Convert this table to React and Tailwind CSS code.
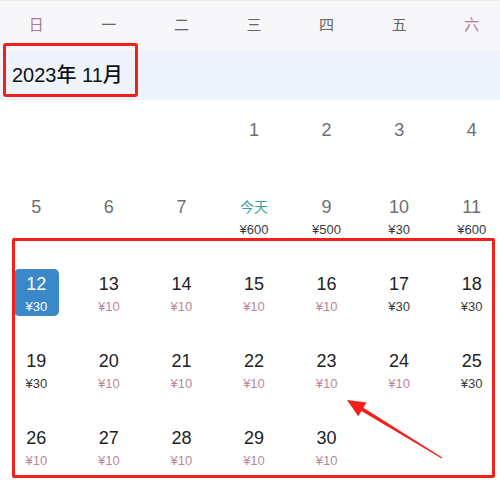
import React from 'react';

const weekdays = ['日', '一', '二', '三', '四', '五', '六'];

const rows = [
  [null, null, null, { d: '1', muted: true }, { d: '2', muted: true }, { d: '3', muted: true }, { d: '4', muted: true }],
  [
    { d: '5', muted: true },
    { d: '6', muted: true },
    { d: '7', muted: true },
    { d: '今天', today: true, p: '¥600', pc: 'dark' },
    { d: '9', muted: true, p: '¥500', pc: 'dark' },
    { d: '10', muted: true, p: '¥30', pc: 'dark' },
    { d: '11', muted: true, p: '¥600', pc: 'dark' },
  ],
  [
    { d: '12', p: '¥30', selected: true },
    { d: '13', p: '¥10', pc: 'pink' },
    { d: '14', p: '¥10', pc: 'pink' },
    { d: '15', p: '¥10', pc: 'pink' },
    { d: '16', p: '¥10', pc: 'pink' },
    { d: '17', p: '¥30', pc: 'dark' },
    { d: '18', p: '¥30', pc: 'dark' },
  ],
  [
    { d: '19', p: '¥30', pc: 'dark' },
    { d: '20', p: '¥10', pc: 'pink' },
    { d: '21', p: '¥10', pc: 'pink' },
    { d: '22', p: '¥10', pc: 'pink' },
    { d: '23', p: '¥10', pc: 'pink' },
    { d: '24', p: '¥10', pc: 'pink' },
    { d: '25', p: '¥30', pc: 'dark' },
  ],
  [
    { d: '26', p: '¥10', pc: 'pink' },
    { d: '27', p: '¥10', pc: 'pink' },
    { d: '28', p: '¥10', pc: 'pink' },
    { d: '29', p: '¥10', pc: 'pink' },
    { d: '30', p: '¥10', pc: 'pink' },
    null,
    null,
  ],
];

const DayCell = ({ cell }) => {
  if (!cell) return <div />;
  if (cell.selected) {
    return (
      <div className="flex justify-center pt-[15px]">
        <div className="w-[45px] h-[47px] rounded-[5px] bg-[#3b88c8] flex flex-col items-center pt-[4px] text-white">
          <span className="text-[18px] leading-[22px]">{cell.d}</span>
          <span className="text-[13px] leading-[16px] mt-[4px]">{cell.p}</span>
        </div>
      </div>
    );
  }
  const numColor = cell.today ? 'text-[#3d9c9a] text-[14px]' : cell.muted ? 'text-[#6f6f6f] text-[18px]' : 'text-[#222] text-[18px]';
  const priceColor = cell.pc === 'pink' ? 'text-[#b9879a]' : 'text-[#3a3a3a]';
  return (
    <div className="flex flex-col items-center pt-[19px]">
      <span className={`leading-[22px] ${numColor}`}>{cell.d}</span>
      {cell.p && <span className={`text-[13px] leading-[16px] mt-[4px] ${priceColor}`}>{cell.p}</span>}
    </div>
  );
};

const App = () => {
  return (
    <div
      className="relative w-[500px] h-[481px] overflow-hidden bg-white"
      style={{ fontFamily: '"Liberation Sans", "Noto Sans CJK SC", sans-serif' }}
    >
      <div className="w-[508px]">
        <div className="h-[50px] grid grid-cols-7 items-center bg-[#f7f7f9] border-t border-[#eeeeee]">
          {weekdays.map((w, i) => (
            <div
              key={w}
              className={`text-center text-[15px] ${i === 0 || i === 6 ? 'text-[#b07a92]' : 'text-[#666]'}`}
            >
              {w}
            </div>
          ))}
        </div>

        <div className="h-[50px] flex items-center bg-[#eef3fc] pl-[12px]">
          <span className="text-[20px] font-medium text-[#111]">2023年 11月</span>
        </div>

        {rows.map((row, ri) => (
          <div key={ri} className="h-[77px] grid grid-cols-7">
            {row.map((cell, ci) => (
              <DayCell key={ci} cell={cell} />
            ))}
          </div>
        ))}
      </div>

      {/* annotation marks */}
      <div className="absolute left-[3px] top-[43px] w-[135px] h-[54px] border-[3px] border-[#f0201a] rounded-[3px]" />
      <div className="absolute left-[12px] top-[238px] w-[483px] h-[240px] border-[3px] border-[#f0201a] rounded-[2px]" />
      <svg className="absolute left-0 top-0" width="500" height="481" viewBox="0 0 500 481">
        <polygon
          points="347,400 366.6,402.6 363.4,407.7 442.3,457.6 441.7,458.4 361.4,411.1 358.2,416.2"
          fill="#f0201a"
        />
      </svg>
    </div>
  );
};

export default App;
